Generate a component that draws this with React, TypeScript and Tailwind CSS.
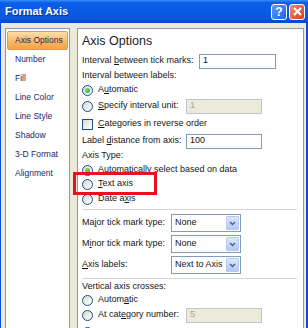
import React from 'react';

const U = ({ children }: { children: React.ReactNode }) => <span className="underline underline-offset-[1px]">{children}</span>;

const Radio = ({ checked }: { checked?: boolean }) => (
  <span className="flex h-[11px] w-[11px] shrink-0 items-center justify-center rounded-full border border-[#1c5180] bg-[linear-gradient(135deg,#d8d8d0,#ffffff)]">
    {checked && <span className="h-[5px] w-[5px] rounded-full bg-[radial-gradient(circle_at_35%_35%,#7be07b,#21a121)]" />}
  </span>
);

const Check = () => (
  <span className="h-[11px] w-[11px] shrink-0 border border-[#1c5180] bg-[linear-gradient(135deg,#dcdcd5,#ffffff)]" />
);

const Box = ({ value, disabled, w }: { value: string; disabled?: boolean; w: string }) => (
  <div
    className={
      'flex h-[15px] items-center border px-[3px] ' +
      w +
      (disabled ? ' border-[#c2c6cc] bg-[#ecead9] text-[#aaa89c]' : ' border-[#7f9db9] bg-white text-[#111]')
    }
  >
    {value}
  </div>
);

const Select = ({ value }: { value: string }) => (
  <div className="flex h-[18px] w-[70px] items-center border border-[#7f9db9] bg-white pl-[3px]">
    <span className="flex-1">{value}</span>
    <span className="mr-[1px] flex h-[14px] w-[13px] items-center justify-center rounded-[1px] border border-[#b7c9f1] bg-[linear-gradient(#dde7fd,#b3c8f6)]">
      <svg width="7" height="5" viewBox="0 0 7 5">
        <path d="M1 1 L3.5 3.5 L6 1" fill="none" stroke="#4d6185" strokeWidth="1.5" />
      </svg>
    </span>
  </div>
);

const Sep = () => <div className="mr-[6px] h-px bg-[#d6d6d6]" />;

const navItems = ['Number', 'Fill', 'Line Color', 'Line Style', 'Shadow', '3-D Format', 'Alignment'];

export default function App() {
  return (
    <div className="relative flex h-[328px] w-[308px] flex-col overflow-hidden bg-[#ece9d8] font-['Liberation_Sans',Arial,sans-serif] text-[9px] text-[#151515]">
      {/* title bar */}
      <div className="flex h-[23px] shrink-0 items-center bg-[linear-gradient(#3b8ef9_0%,#0a5ee8_12%,#0658e2_80%,#0348cc_100%)] pl-[5px] pr-[3px]">
        <span className="flex-1 text-[11px] font-bold text-white [text-shadow:1px_1px_0_#0a2f8a]">Format Axis</span>
        <div className="flex gap-[2px]">
          <div className="flex h-[16px] w-[16px] items-center justify-center rounded-[3px] border border-white bg-[linear-gradient(135deg,#5d9bff,#1f5fe6)] text-[12px] font-bold leading-none text-white">
            ?
          </div>
          <div className="flex h-[16px] w-[16px] items-center justify-center rounded-[3px] border border-white bg-[linear-gradient(135deg,#f08a6c,#d4401e)]">
            <svg width="9" height="9" viewBox="0 0 9 9">
              <path d="M1 1 L8 8 M8 1 L1 8" stroke="white" strokeWidth="2" />
            </svg>
          </div>
        </div>
      </div>

      {/* body */}
      <div className="flex flex-1 gap-[7px] border-l border-r-2 border-[#0a4ed8] pl-[4px] pt-[5px]">
        {/* left nav */}
        <div className="h-[320px] w-[65px] shrink-0 border border-[#7f9db9] bg-white pt-[2px] text-[8.5px] text-[#25256a]">
          <div className="mx-[1px] flex h-[19px] items-center rounded-[2px] border border-[#e59a47] bg-[linear-gradient(#fde0a8,#f9b865_55%,#f6a24a)] pl-[7px]">
            Axis Options
          </div>
          {navItems.map((n) => (
            <div key={n} className="flex h-[19px] items-center pl-[9px]">
              {n}
            </div>
          ))}
        </div>

        {/* right panel */}
        <div className="h-[320px] w-[227px] shrink-0 border border-[#7f9db9] bg-white pl-[4px]">
          <div className="flex h-[24px] items-center text-[12.5px] text-[#1a1a2a]">Axis Options</div>

          <div className="flex h-[16px] items-center">
            <span className="w-[117px]">
              Interval <U>b</U>etween tick marks:
            </span>
            <Box value="1" w="w-[77px]" />
          </div>

          <div className="flex h-[14px] items-center">Interval between labels:</div>

          <div className="flex h-[14px] items-center gap-[5px]">
            <Radio checked />
            <span>
              A<U>u</U>tomatic
            </span>
          </div>

          <div className="flex h-[18px] items-center">
            <Radio />
            <span className="ml-[5px] w-[88px]">
              <U>S</U>pecify interval unit:
            </span>
            <Box value="1" disabled w="w-[76px]" />
          </div>

          <div className="flex h-[18px] items-center gap-[5px]">
            <Check />
            <span>
              <U>C</U>ategories in reverse order
            </span>
          </div>

          <div className="flex h-[16px] items-center">
            <span className="w-[104px]">
              Label <U>d</U>istance from axis:
            </span>
            <Box value="100" w="w-[76px]" />
          </div>

          <div className="flex h-[14px] items-center">Axis Type:</div>

          <div className="flex h-[14px] items-center gap-[5px]">
            <Radio checked />
            <span>Automatically select based on data</span>
          </div>

          <div className="flex h-[14px] items-center gap-[5px]">
            <Radio />
            <span>
              <U>T</U>ext axis
            </span>
          </div>

          <div className="flex h-[16px] items-center gap-[5px]">
            <Radio />
            <span>
              Date a<U>x</U>is
            </span>
          </div>

          <div className="mt-[2px]">
            <Sep />
          </div>

          <div className="mt-[4px] flex flex-col gap-[3px]">
            <div className="flex items-center">
              <span className="w-[89px]">
                Ma<U>j</U>or tick mark type:
              </span>
              <Select value="None" />
            </div>
            <div className="flex items-center">
              <span className="w-[89px]">
                M<U>i</U>nor tick mark type:
              </span>
              <Select value="None" />
            </div>
            <div className="flex items-center">
              <span className="w-[89px]">
                <U>A</U>xis labels:
              </span>
              <Select value="Next to Axis" />
            </div>
          </div>

          <div className="mt-[4px]">
            <Sep />
          </div>

          <div className="flex h-[15px] items-center">Vertical axis crosses:</div>

          <div className="flex h-[12px] items-center gap-[5px]">
            <Radio />
            <span>
              Autom<U>a</U>tic
            </span>
          </div>

          <div className="flex h-[18px] items-center">
            <Radio />
            <span className="ml-[5px] w-[88px]">
              At cat<U>e</U>gory number:
            </span>
            <Box value="5" disabled w="w-[76px]" />
          </div>

          <div className="flex h-[16px] items-center">
            <Radio />
          </div>
        </div>
      </div>

      {/* red highlight annotation */}
      <div className="absolute left-[73px] top-[172px] h-[23px] w-[84px] border-[3px] border-[#e6131c]" />
    </div>
  );
}
